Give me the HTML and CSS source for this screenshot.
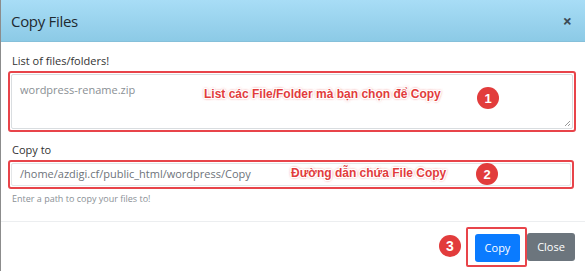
FILE: index.html
```html
<!DOCTYPE html>
<html>
<head>
<meta charset="utf-8">
<link rel="stylesheet" href="styles.css">
</head>
<body>
<div class="modal">
  <div class="modal-header">
    <span class="modal-title">Copy Files</span>
    <span class="close">×</span>
  </div>
  <div class="modal-body">
    <div class="label">List of files/folders!</div>
    <div class="mark-box mark-area">
      <div class="textarea">
        <span class="placeholder">wordpress-rename.zip</span>
        <span class="resize"></span>
      </div>
      <span class="note note-1">List các File/Folder mà bạn chọn để Copy</span>
      <span class="badge badge-1">1</span>
    </div>
    <div class="label label-2">Copy to</div>
    <div class="mark-box mark-input">
      <div class="input">/home/azdigi.cf/public_html/wordpress/Copy</div>
      <span class="note note-2">Đường dẫn chứa File Copy</span>
      <span class="badge badge-2">2</span>
    </div>
    <div class="help">Enter a path to copy your files to!</div>
  </div>
  <div class="modal-footer">
    <span class="badge badge-3">3</span>
    <div class="mark-btn"><button class="btn btn-primary">Copy</button></div>
    <button class="btn btn-secondary">Close</button>
  </div>
</div>
</body>
</html>
```
FILE: styles.css
```css
html, body {
  margin: 0;
  padding: 0;
  background: #fff;
}
body {
  font-family: "Open Sans", "Noto Sans", sans-serif;
  width: 585px;
  height: 271px;
  overflow: hidden;
}
.modal {
  height: 271px;
  border-left: 1px solid #8c8c8c;
  box-sizing: border-box;
  display: flex;
  flex-direction: column;
}
.modal-header {
  height: 42px;
  box-sizing: border-box;
  background: linear-gradient(#a8ddf6, #8ccae6);
  border-bottom: 1px solid #86c0da;
  display: flex;
  align-items: center;
  justify-content: space-between;
  padding: 0 13px 0 10px;
}
.modal-title {
  font-size: 15px;
  color: #1f2a31;
  letter-spacing: -0.3px;
}
.close {
  font-size: 16px;
  font-weight: bold;
  color: #3b4a55;
}
.modal-body {
  padding: 12px 9px 0 7px;
  flex: 1;
}
.label {
  font-size: 11px;
  color: #333;
  margin-left: 4px;
  line-height: 14px;
}
.label-2 {
  margin-top: 11px;
}
.mark-box {
  position: relative;
  border: 2px solid #e8444a;
  border-radius: 3px;
  padding: 1px;
}
.mark-area {
  margin-top: 3px;
  height: 55px;
}
.textarea {
  height: 100%;
  box-sizing: border-box;
  border: 1px solid #d9dde0;
  border-radius: 2px;
  padding: 2px 8px;
  position: relative;
}
.placeholder {
  font-size: 11px;
  color: #8a8f94;
}
.resize {
  position: absolute;
  right: 2px;
  bottom: 2px;
  width: 5px;
  height: 5px;
  background: linear-gradient(135deg, transparent 45%, #999 45%, #999 55%, transparent 55%, transparent 75%, #999 75%, #999 85%, transparent 85%);
}
.mark-input {
  margin-top: 3px;
  height: 23px;
  margin-right: 2px;
}
.input {
  height: 100%;
  box-sizing: border-box;
  border: 1px solid #e3e6e8;
  border-radius: 2px;
  padding: 0 8px 2px;
  font-size: 11px;
  color: #6d737a;
  display: flex;
  align-items: center;
}
.note {
  position: absolute;
  font-family: "Liberation Sans", Arial, sans-serif;
  font-weight: bold;
  font-size: 12px;
  color: #e23c3c;
  text-shadow: 1px 0 0 #fff, -1px 0 0 #fff, 0 1px 0 #fff, 0 -1px 0 #fff, 1px 1px 0 #fff, -1px -1px 0 #fff, 1px -1px 0 #fff, -1px 1px 0 #fff, 0 0 3px #e87070, 0 0 3px #e87070;
  white-space: nowrap;
}
.note-1 {
  left: 194px;
  top: 14px;
}
.note-2 {
  left: 281px;
  top: 4px;
}
.badge {
  position: absolute;
  width: 22px;
  height: 22px;
  border-radius: 50%;
  background: #e23c3c;
  color: #fff;
  font-family: "Liberation Sans", Arial, sans-serif;
  font-weight: bold;
  font-size: 13px;
  display: flex;
  align-items: center;
  justify-content: center;
}
.badge-1 {
  left: 467px;
  top: 14px;
}
.badge-2 {
  left: 466px;
  top: 1px;
}
.help {
  font-size: 9px;
  color: #8a9096;
  margin: 3px 0 0 4px;
}
.modal-footer {
  border-top: 1px solid #eceef0;
  height: 50px;
  box-sizing: border-box;
  display: flex;
  align-items: center;
  justify-content: flex-end;
  padding: 0 10px 0 0;
  position: relative;
}
.mark-btn {
  border: 2px solid #e8444a;
  border-radius: 2px;
  padding: 5px 5px 3px 7px;
  margin-right: 0;
}
.btn {
  border: none;
  border-radius: 3px;
  font-family: "Open Sans", "Noto Sans", sans-serif;
  font-size: 11px;
  color: #fff;
  height: 28px;
  padding: 0 9px;
  display: block;
}
.btn-primary {
  background: #0a7bff;
  width: 45px;
}
.btn-secondary {
  background: #6c757d;
  width: 48px;
}
.badge-3 {
  left: 438px;
  top: 13px;
  font-size: 14px;
}
```
